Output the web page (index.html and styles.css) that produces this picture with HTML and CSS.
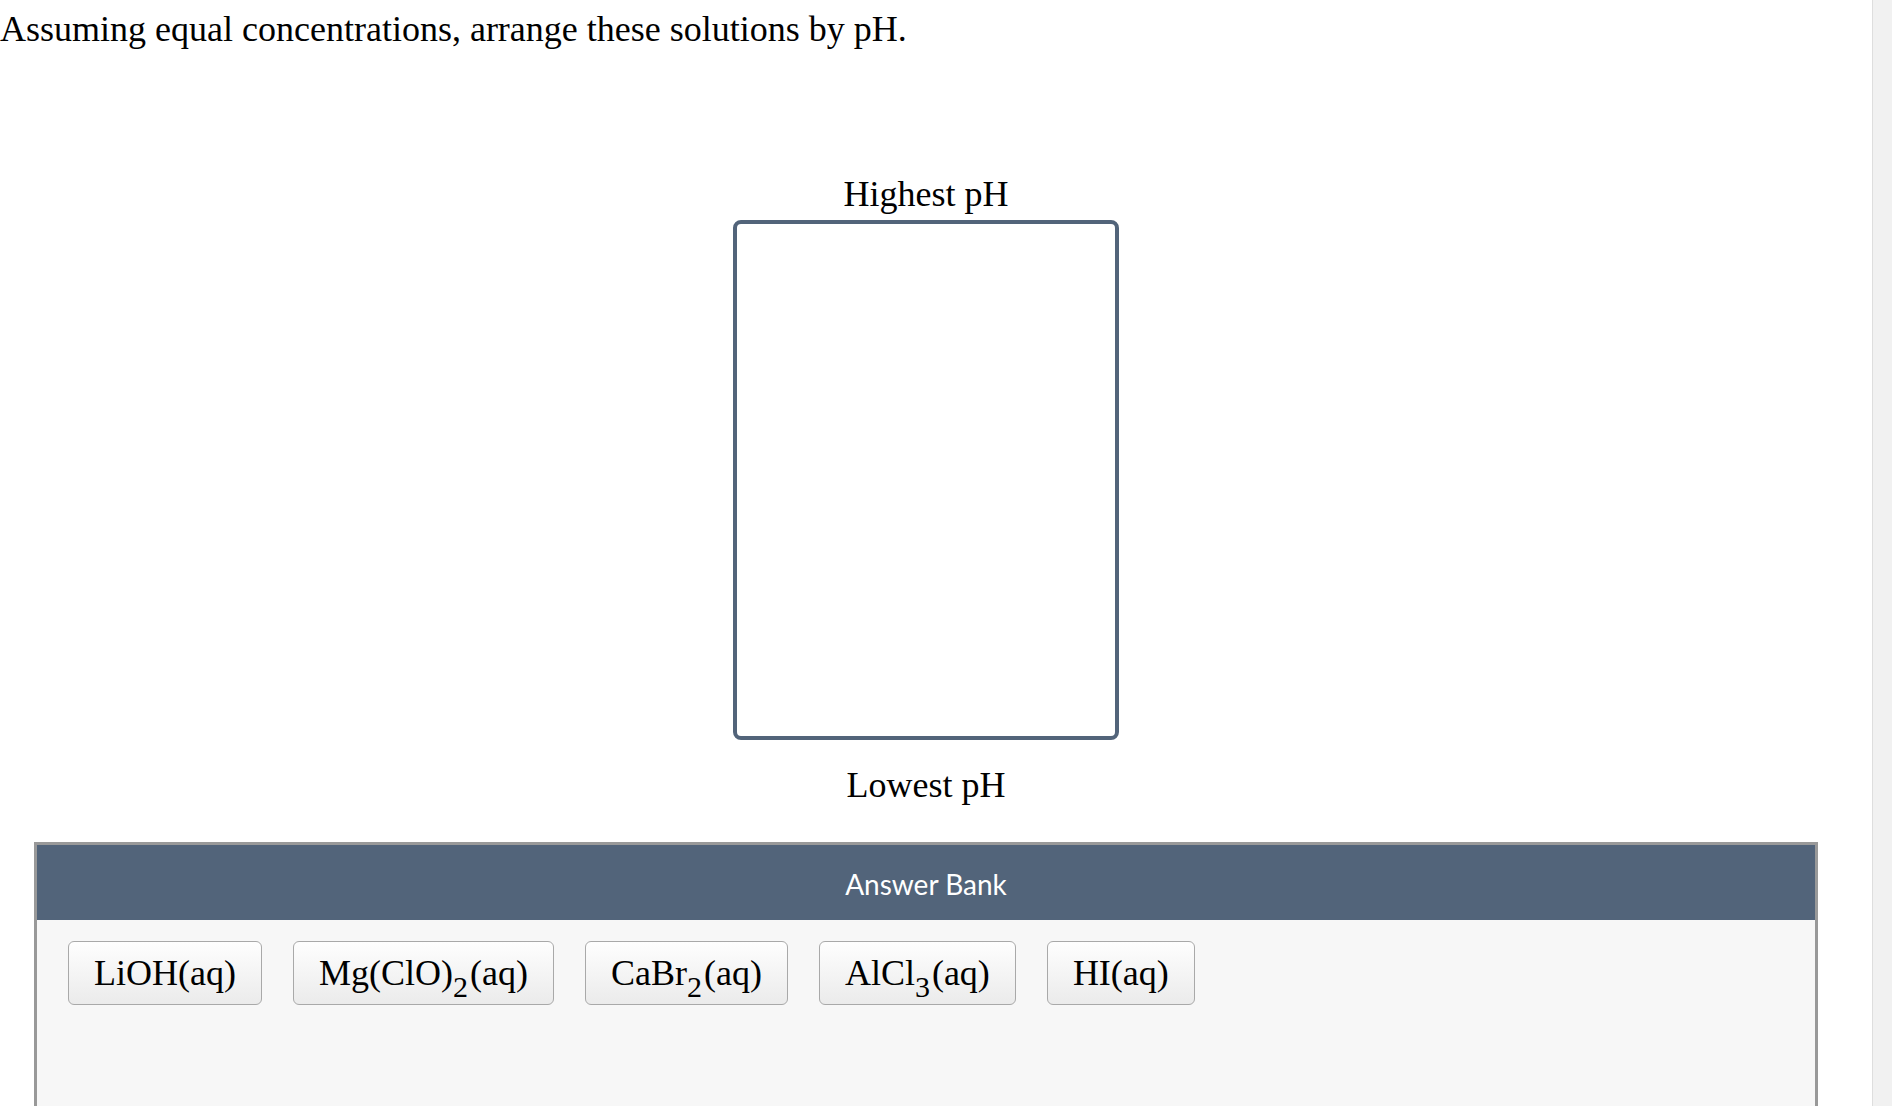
FILE: index.html
```html
<!DOCTYPE html>
<html lang="en">
<head>
  <meta charset="UTF-8" />
  <title>Arrange by pH</title>
  <link rel="stylesheet" href="styles.css">
</head>
<body>
  <div class="viewport">
    <main class="content">
      <p class="prompt">Assuming equal concentrations, arrange these solutions by pH.</p>

      <div class="question">
        <!-- Ranking target -->
        <div class="sorter">
          <div class="rank-label">Highest pH</div>
          <div class="drop-zone"></div>
          <div class="rank-label rank-label-low">Lowest pH</div>
        </div>

        <!-- Answer Bank -->
        <section class="bank">
          <div class="bank-header">Answer Bank</div>
          <div class="bank-items">
            <button class="chip">LiOH(aq)</button>
            <button class="chip">Mg(ClO)<sub class="sub">2</sub>(aq)</button>
            <button class="chip">CaBr<sub class="sub">2</sub>(aq)</button>
            <button class="chip">AlCl<sub class="sub">3</sub>(aq)</button>
            <button class="chip">HI(aq)</button>
          </div>
        </section>
      </div>
    </main>
    <div class="scroll-track"></div>
  </div>
</body>
</html>
```

FILE: styles.css
```css
html, body {
  margin: 0;
  padding: 0;
  background: #fff;
  font-family: "Liberation Serif", "Times New Roman", serif;
  color: #000;
}

.viewport {
  display: flex;
  height: 100vh;
  overflow: hidden;
}

.content {
  flex: 1;
  min-width: 0;
}

.scroll-track {
  width: 19px;
  background: #f1f1f1;
  border-left: 1px solid #dedede;
}

.prompt {
  margin: 0;
  padding-top: 9px;
  font-size: 36px;
  line-height: 41px;
}

.question {
  margin: 0 54px 0 34px;
}

.sorter {
  display: flex;
  flex-direction: column;
  align-items: center;
  margin-top: 124px;
}

.rank-label {
  font-size: 36px;
  line-height: 40px;
}

.drop-zone {
  box-sizing: border-box;
  width: 386px;
  height: 520px;
  margin-top: 6px;
  border: 4px solid #52647a;
  border-radius: 8px;
  background: #fff;
}

.rank-label-low {
  margin-top: 25px;
}

.bank {
  margin-top: 37px;
  border: 3px solid #999;
  background: #f7f7f7;
}

.bank-header {
  box-sizing: border-box;
  height: 75px;
  padding-top: 3px;
  display: flex;
  align-items: center;
  justify-content: center;
  background: #52647a;
  color: #fff;
  font-family: Lato, "Open Sans", sans-serif;
  font-size: 28px;
}

.bank-items {
  display: flex;
  gap: 31px;
  padding: 21px 31px;
  min-height: 300px;
  align-items: flex-start;
}

.chip {
  box-sizing: border-box;
  height: 64px;
  padding: 0 25px;
  border: 1px solid #a9a9a9;
  border-radius: 6px;
  background: linear-gradient(to bottom, #fefefe, #ebebeb);
  font-family: "Liberation Serif", "Times New Roman", serif;
  font-size: 36px;
  color: #000;
  white-space: nowrap;
}

.sub {
  font-size: 30px;
  line-height: 0;
  vertical-align: -12px;
  margin-right: 2px;
}
```
